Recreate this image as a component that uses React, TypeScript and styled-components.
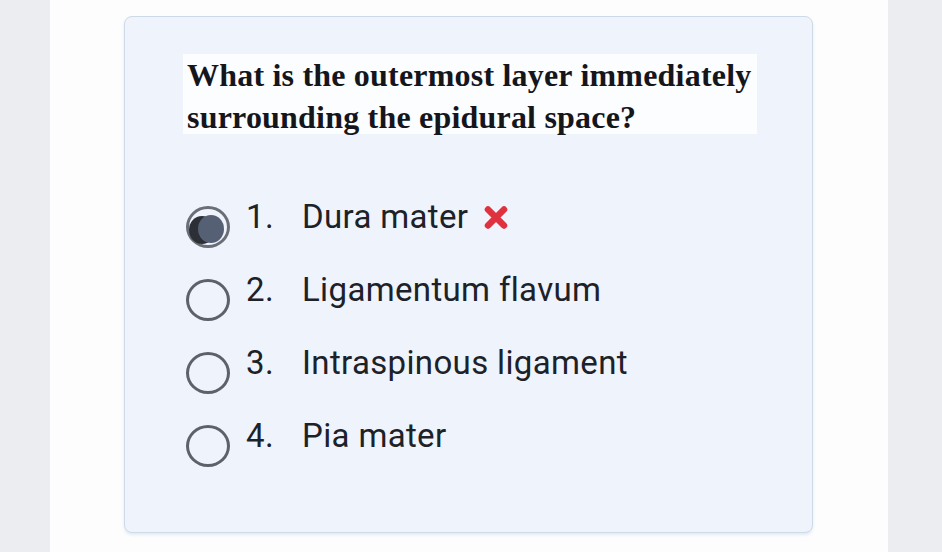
import React from "react";
import styled, { createGlobalStyle } from "styled-components";

const GlobalStyle = createGlobalStyle`
  html, body { margin: 0; padding: 0; }
  body { background: #ffffff; font-family: Roboto, "Liberation Sans", sans-serif; }
`;

const Page = styled.div`
  display: grid;
  grid-template-columns: 50px 1fr 54px;
  width: 942px;
  height: 552px;
  overflow: hidden;
`;

const SideStrip = styled.div`
  background: #ebedf0;
`;

const Center = styled.div`
  background: #fdfdfe;
  padding: 16px 0 0 74px;
`;

const Card = styled.div`
  box-sizing: border-box;
  width: 689px;
  height: 517px;
  background: #eef3fc;
  border: 1.5px solid #cddbe8;
  border-radius: 8px;
  box-shadow: 0 2px 3px rgba(180, 200, 215, 0.35);
  padding: 37px 0 0 58px;
`;

const QuestionBox = styled.div`
  box-sizing: border-box;
  width: 574px;
  height: 80px;
  background: #fcfdfe;
  padding-left: 4px;
  font-family: "Liberation Serif", "Times New Roman", serif;
  font-weight: 700;
  font-size: 32px;
  line-height: 42px;
  color: #15161c;
  letter-spacing: 0.2px;
`;

const Options = styled.div`
  display: flex;
  flex-direction: column;
  gap: 33px;
  margin-top: 63px;
`;

const Row = styled.div`
  display: flex;
  align-items: flex-start;
  height: 40px;
  font-family: Roboto, "Liberation Sans", sans-serif;
  font-size: 33px;
  line-height: 40px;
  letter-spacing: 0.35px;
  color: #1d2128;
`;

const Radio = styled.span<{ $checked?: boolean }>`
  position: relative;
  box-sizing: border-box;
  flex: none;
  width: 44px;
  height: 42px;
  margin: 9px 0 0 3px;
  border-radius: 50%;
  border: 3.5px solid ${(p) => (p.$checked ? "#6a6e77" : "#5d6169")};
`;

const RadioDot = styled.span`
  position: absolute;
  left: 9px;
  top: 6px;
  width: 26px;
  height: 28px;
  border-radius: 50%;
  background: #566075;
  box-shadow: -9px 1px 0 0 #2c2f36;
`;

const Num = styled.span`
  width: 56px;
  margin-left: 16px;
  flex: none;
`;

const Label = styled.span`
  white-space: nowrap;
`;

const Cross = styled.svg`
  flex: none;
  width: 26px;
  height: 25px;
  margin: 8px 0 0 15px;
`;

const options = [
  { n: "1.", text: "Dura mater", checked: true, wrong: true },
  { n: "2.", text: "Ligamentum flavum" },
  { n: "3.", text: "Intraspinous ligament" },
  { n: "4.", text: "Pia mater" },
];

export default function App() {
  return (
    <>
      <GlobalStyle />
      <Page>
        <SideStrip />
        <Center>
          <Card>
            <QuestionBox>
              What is the outermost layer immediately
              <br />
              surrounding the epidural space?
            </QuestionBox>
            <Options>
              {options.map((o) => (
                <Row key={o.n}>
                  <Radio $checked={o.checked}>{o.checked && <RadioDot />}</Radio>
                  <Num>{o.n}</Num>
                  <Label>{o.text}</Label>
                  {o.wrong && (
                    <Cross viewBox="0 0 26 25">
                      <path
                        d="M5 4.5 L21 20.5 M21 4.5 L5 20.5"
                        stroke="#e0313e"
                        strokeWidth="6.5"
                        strokeLinecap="round"
                        fill="none"
                      />
                    </Cross>
                  )}
                </Row>
              ))}
            </Options>
          </Card>
        </Center>
        <SideStrip />
      </Page>
    </>
  );
}
